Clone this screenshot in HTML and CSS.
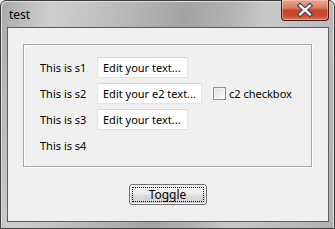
FILE: index.html
```html
<!DOCTYPE html>
<html lang="en">
<head>
    <meta charset="UTF-8">
    <meta name="viewport" content="width=device-width, initial-scale=1.0">
    <title>test</title>
    <link rel="stylesheet" href="styles.css">
</head>
<body>
    <div class="window">
        <div class="titlebar">
            <span class="title">test</span>
            <button class="close-button" aria-label="Close">
                <svg width="47" height="20" viewBox="0 0 47 20">
                    <path d="M18.5 5.5 L28.5 14.5 M28.5 5.5 L18.5 14.5" stroke="#3b3f4a" stroke-width="4.5" stroke-linecap="square"/>
                    <path d="M18.5 5.5 L28.5 14.5 M28.5 5.5 L18.5 14.5" stroke="#ffffff" stroke-width="2.4" stroke-linecap="square"/>
                </svg>
            </button>
        </div>

        <div class="client">
            <div class="group">
                <div class="row">
                    <span class="label">This is s1</span>
                    <input type="text" class="edit" value="Edit your text...">
                </div>
                <div class="row">
                    <span class="label">This is s2</span>
                    <input type="text" class="edit edit-wide" value="Edit your e2 text...">
                    <label class="check">
                        <span class="check-box"></span>
                        c2 checkbox
                    </label>
                </div>
                <div class="row">
                    <span class="label">This is s3</span>
                    <input type="text" class="edit" value="Edit your text...">
                </div>
                <div class="row">
                    <span class="label">This is s4</span>
                </div>
            </div>

            <div class="actions">
                <button class="toggle-button">Toggle</button>
            </div>
        </div>
    </div>
</body>
</html>
```

FILE: styles.css
```css
body {
    margin: 0;
    font-family: "Noto Sans", Arial, sans-serif;
    font-size: 11px;
    color: #000000;
    background-color: #ffffff;
}

.window {
    box-sizing: border-box;
    width: 335px;
    height: 229px;
    padding: 0 5px 6px 6px;
    display: flex;
    flex-direction: column;
    border: 1px solid #3f3f3f;
    border-radius: 6px 6px 0 0;
    background: linear-gradient(100deg, #a9a9a9 0%, #cfcfcf 14%, #bdbdbd 30%, #a3a3a3 50%, #b2b2b2 62%, #c9c9c9 72%, #bcbcbc 88%, #b0b0b0 100%);
    box-shadow: inset 1px 1px 0 #dcdcdc, inset -1px 0 0 #dcdcdc;
}

.titlebar {
    height: 26px;
    display: flex;
    align-items: flex-start;
}

.title {
    padding-left: 2px;
    margin-top: 6px;
    line-height: 16px;
    font-size: 12px;
}

.close-button {
    margin-left: auto;
    margin-top: -1px;
    width: 48px;
    height: 21px;
    padding: 0;
    border: 1px solid #4b1a12;
    border-top: none;
    border-radius: 0 0 4px 4px;
    background: linear-gradient(#e7a898 0%, #d97a63 40%, #c7452b 52%, #c84a2f 78%, #dc7453 100%);
    box-shadow: inset 0 0 0 1px rgba(255, 210, 200, 0.45);
    display: flex;
    align-items: center;
    justify-content: center;
}

.close-button svg {
    display: block;
}

.client {
    flex: 1;
    padding: 16px 16px 0 15px;
    background-color: #f0f0f0;
    border: 1px solid #5c5c5c;
}

.group {
    box-sizing: border-box;
    height: 123px;
    padding: 12px 10px 0 16px;
    border: 1px solid #a6a6a6;
    box-shadow: 1px 1px 0 #ffffff, inset 1px 1px 0 #ffffff;
    display: flex;
    flex-direction: column;
    gap: 5px;
}

.row {
    display: flex;
    align-items: center;
    height: 21px;
}

.label {
    width: 57px;
    flex-shrink: 0;
    white-space: nowrap;
}

.edit {
    box-sizing: border-box;
    width: 91px;
    height: 21px;
    padding: 0 0 0 5px;
    margin: 0;
    font-family: inherit;
    font-size: 11px;
    color: #000000;
    background-color: #ffffff;
    border: 1px solid #e2e3e7;
    border-top-color: #d6d7dc;
    outline: none;
}

.edit-wide {
    width: 105px;
}

.check {
    display: flex;
    align-items: center;
    gap: 3px;
    margin-left: 11px;
    white-space: nowrap;
}

.check-box {
    box-sizing: border-box;
    width: 13px;
    height: 13px;
    border: 1px solid #8e8f8f;
    background: linear-gradient(135deg, #dcdcdc 0%, #f4f4f4 70%, #ffffff 100%);
    box-shadow: inset 0 0 0 1px #f4f4f4;
}

.actions {
    display: flex;
    justify-content: center;
    margin-top: 17px;
}

.toggle-button {
    width: 78px;
    height: 21px;
    padding: 0;
    font-family: inherit;
    font-size: 12px;
    color: #000000;
    border: 1px solid #707070;
    border-radius: 3px;
    background: linear-gradient(#f2f2f2 0%, #ebebeb 48%, #dddddd 52%, #cfcfcf 100%);
    box-shadow: inset 0 0 0 1px #fbfbfb;
    outline: 1px dotted #000000;
    outline-offset: -4px;
}
```
